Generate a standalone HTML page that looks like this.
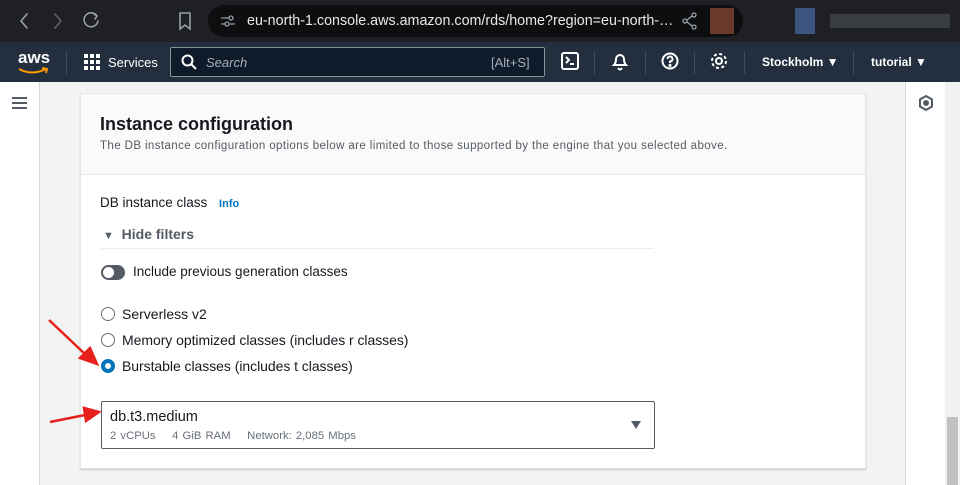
<!DOCTYPE html>
<html><head><style>
*{box-sizing:border-box;margin:0;padding:0}
body{width:960px;height:485px;overflow:hidden;font-family:"Liberation Sans",sans-serif;background:#f2f3f3;position:relative}
.abs{position:absolute;white-space:nowrap}
.chrome{left:0;top:0;width:960px;height:42px;background:#1f2023}
.url{left:208px;top:5px;width:535px;height:32px;background:#0d0e10;border-radius:16px;color:#e8e8e8;font-size:14.3px;line-height:32px;padding-left:39px;overflow:hidden}
.nav{left:0;top:42px;width:960px;height:40px;background:#232f3e;color:#fff;font-size:13px}
.side{left:0;top:82px;width:40px;height:403px;background:#fff;border-right:1px solid #d5dbdb}
.rside{left:905px;top:82px;width:40px;height:403px;background:#fff;border-left:1px solid #d5dbdb}
.sb{left:945px;top:82px;width:15px;height:403px;background:#f1f1f1}
.card{left:80px;top:93px;width:786px;height:376px;background:#fff;border:1px solid #e4e7e7;box-shadow:0 1px 1px rgba(0,28,36,.2)}
.hd{left:0;top:0;width:784px;height:81px;background:#fafafa;border-bottom:1px solid #eaeded}
.t{color:#16191f;font-size:14px}
.radio{width:14px;height:14px;border:1.5px solid #687078;border-radius:50%;background:#fff}
</style></head><body>
<div class="abs chrome">
<svg class="abs" style="left:15px;top:11px" width="120" height="20" fill="none" stroke-width="1.6" stroke-linecap="round">
<path d="M12 3 L6 10 L12 17" stroke="#9aa0a6"/><path d="M40 3 L46 10 L40 17" stroke="#5f6368"/>
<path d="M82 5 A7 7 0 1 0 83 10 M79 3 L82 5 L80 8" stroke="#9aa0a6"/></svg>
<svg class="abs" style="left:178px;top:11px" width="14" height="20" fill="none" stroke="#9aa0a6" stroke-width="1.6"><path d="M2 2 H12 V18 L7 14 L2 18 Z"/></svg>
<div class="abs url">eu-north-1.console.aws.amazon.com/rds/home?region=eu-north-…</div>
<svg class="abs" style="left:221px;top:15px" width="14" height="12" fill="none" stroke="#9aa0a6" stroke-width="1.3"><path d="M0 3H8M0 9H4M9 9H14"/><circle cx="10" cy="3" r="2"/><circle cx="6" cy="9" r="2"/></svg>
<div class="abs" style="left:676px;top:8px;width:28px;height:26px;background:#0d0e10"></div>
<svg class="abs" style="left:682px;top:12px" width="16" height="18" fill="none" stroke="#9aa0a6" stroke-width="1.3"><circle cx="12" cy="3" r="2"/><circle cx="3" cy="9" r="2"/><circle cx="12" cy="15" r="2"/><path d="M5 8L10 4M5 10L10 14"/></svg>
<div class="abs" style="left:710px;top:8px;width:24px;height:26px;background:#6b3a2a"></div>
<div class="abs" style="left:795px;top:8px;width:20px;height:26px;background:#3d5580"></div>
<div class="abs" style="left:830px;top:14px;width:120px;height:14px;background:#3a3d40"></div>
</div>
<div class="abs nav">
<div class="abs" style="left:18px;top:6px;font-size:17px;font-weight:bold">aws</div>
<svg class="abs" style="left:18px;top:25px" width="32" height="8" fill="none" stroke="#f90" stroke-width="2"><path d="M1 2 Q14 9 28 2 M24 1 L29 2 L28 6"/></svg>
<div class="abs" style="left:66px;top:10px;width:1px;height:22px;background:#414d5c"></div>
<svg class="abs" style="left:84px;top:12px" width="17" height="17" fill="#fff"><rect x="0" y="0" width="4" height="4"/><rect x="6" y="0" width="4" height="4"/><rect x="12" y="0" width="4" height="4"/><rect x="0" y="6" width="4" height="4"/><rect x="6" y="6" width="4" height="4"/><rect x="12" y="6" width="4" height="4"/><rect x="0" y="12" width="4" height="4"/><rect x="6" y="12" width="4" height="4"/><rect x="12" y="12" width="4" height="4"/></svg>
<div class="abs" style="left:108px;top:13px">Services</div>
<div class="abs" style="left:170px;top:5px;width:375px;height:30px;border:1px solid #879596;border-radius:2px;background:#0f1b2a"></div>
<svg class="abs" style="left:181px;top:12px" width="16" height="16" fill="none" stroke="#fff" stroke-width="2"><circle cx="6.5" cy="6.5" r="5"/><path d="M10 10L15 15"/></svg>
<div class="abs" style="left:206px;top:13px;color:#a6aeb5;font-style:italic">Search</div>
<div class="abs" style="left:491px;top:13px;color:#a6aeb5">[Alt+S]</div>
<svg class="abs" style="left:561px;top:10px" width="18" height="18" fill="none" stroke="#fff" stroke-width="2"><rect x="1" y="1" width="16" height="16" rx="2"/><path d="M5 5L8 8L5 11M9 12H13"/></svg>
<div class="abs" style="left:594px;top:10px;width:1px;height:22px;background:#414d5c"></div>
<svg class="abs" style="left:611px;top:10px" width="18" height="20" fill="none" stroke="#fff" stroke-width="2"><path d="M3 13Q5 11 5 7A4 4 0 0 1 13 7Q13 11 15 13Z M7 16Q9 19 11 16"/></svg>
<div class="abs" style="left:645px;top:10px;width:1px;height:22px;background:#414d5c"></div>
<svg class="abs" style="left:661px;top:10px" width="18" height="18" fill="none" stroke="#fff" stroke-width="2"><circle cx="9" cy="9" r="7.5"/><path d="M6.5 7A2.5 2.5 0 1 1 9 9.5V11"/><circle cx="9" cy="13.5" r=".6" fill="#fff"/></svg>
<div class="abs" style="left:694px;top:10px;width:1px;height:22px;background:#414d5c"></div>
<svg class="abs" style="left:710px;top:10px" width="18" height="18" fill="none" stroke="#fff" stroke-width="2"><circle cx="9" cy="9" r="3"/><circle cx="9" cy="9" r="7" stroke-dasharray="3 2.5"/></svg>
<div class="abs" style="left:744px;top:10px;width:1px;height:22px;background:#414d5c"></div>
<div class="abs" style="left:762px;top:13px;font-weight:bold;font-size:12px">Stockholm ▼</div>
<div class="abs" style="left:853px;top:10px;width:1px;height:22px;background:#414d5c"></div>
<div class="abs" style="left:871px;top:13px;font-weight:bold;font-size:12px">tutorial ▼</div>
</div>
<div class="abs side"><svg class="abs" style="left:12px;top:14px" width="16" height="14" stroke="#545b64" stroke-width="2"><path d="M0 2H15M0 7H15M0 12H15"/></svg></div>
<div class="abs rside"><svg class="abs" style="left:12px;top:12px" width="16" height="18" fill="none" stroke="#545b64" stroke-width="2"><path d="M8 2L14 5.5V12.5L8 16L2 12.5V5.5Z"/><circle cx="8" cy="9" r="2" fill="#545b64"/></svg></div>
<div class="abs sb"><div class="abs" style="left:2px;top:335px;width:11px;height:68px;background:#c1c1c1"></div></div>
<div class="abs card">
<div class="abs hd"></div>
<div class="abs" style="left:19px;top:20px;font-size:18px;font-weight:bold;color:#16191f">Instance configuration</div>
<div class="abs" style="left:19px;top:46px;font-size:11.5px;letter-spacing:0.4px;color:#545b64">The DB instance configuration options below are limited to those supported by the engine that you selected above.</div>
<div class="abs t" style="left:19px;top:101px;font-size:13.5px">DB instance class <b style="color:#0073bb;font-size:11px;margin-left:8px">Info</b></div>
<div class="abs t" style="left:22px;top:132px;font-weight:bold;color:#545b64"><span style="font-size:11px">▼</span>&nbsp; Hide filters</div>
<div class="abs" style="left:20px;top:154px;width:553px;height:1px;background:#eaeded"></div>
<div class="abs" style="left:20px;top:171px;width:24px;height:15px;border-radius:8px;background:#545b64"><div class="abs" style="left:2px;top:2px;width:11px;height:11px;border-radius:50%;background:#fff"></div></div>
<div class="abs t" style="left:52px;top:170px;font-size:13.5px">Include previous generation classes</div>
<div class="abs radio" style="left:20px;top:213px"></div><div class="abs t" style="left:41px;top:212px">Serverless v2</div>
<div class="abs radio" style="left:20px;top:239px"></div><div class="abs t" style="left:41px;top:238px;letter-spacing:-0.05px">Memory optimized classes (includes r classes)</div>
<div class="abs radio" style="left:20px;top:265px;border:4px solid #0073bb"></div><div class="abs t" style="left:41px;top:264px;letter-spacing:-0.05px">Burstable classes (includes t classes)</div>
<div class="abs" style="left:20px;top:307px;width:554px;height:48px;border:1px solid #545b64;border-radius:2px"></div>
<div class="abs t" style="left:29px;top:315px;font-size:14.5px">db.t3.medium</div>
<div class="abs" style="left:29px;top:336px;font-size:11.3px;color:#687078;word-spacing:1px">2 vCPUs &nbsp;&nbsp; 4 GiB RAM &nbsp;&nbsp; Network: 2,085 Mbps</div>
<div class="abs" style="left:550px;top:327px;width:0;height:0;border-left:5px solid transparent;border-right:5px solid transparent;border-top:8px solid #545b64"></div>
</div>
<svg class="abs" style="left:0;top:0" width="960" height="485" fill="#e8201b" stroke="#e8201b" stroke-width="2.5">
<path d="M49 320L86 355"/><path d="M97 364L80 358L90 348Z"/>
<path d="M50 422L85 415"/><path d="M99 412L84 408L86 421Z"/>
</svg>
</body></html>
